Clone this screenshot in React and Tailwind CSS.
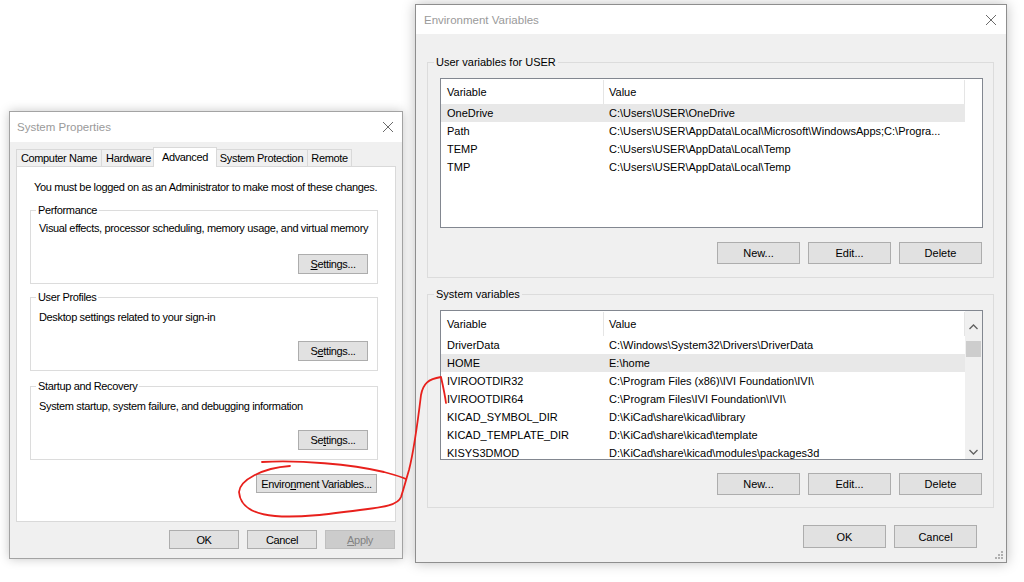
import { useState } from "react";

// small helpers for the win10 look
function Btn({ children, className = "", disabled = false }) {
  return (
    <button
      className={
        "flex items-center justify-center border whitespace-nowrap leading-[16px] " +
        (disabled ? "bg-[#cccccc] border-[#bfbfbf] text-[#838383] " : "bg-[#e1e1e1] border-[#adadad] text-black ") +
        className
      }
    >
      {children}
    </button>
  );
}

function CloseX() {
  return (
    <svg width="12" height="12" viewBox="0 0 12 12">
      <path d="M1 1L11 11M11 1L1 11" stroke="#6b6b6b" strokeWidth="1" fill="none" />
    </svg>
  );
}

function Group({ title, desc, mnemonic, className = "", pad = "pt-[2px]" }) {
  return (
    <fieldset className={"border border-[#dcdcdc] " + className}>
      <legend className="ml-[5px] px-[2px] leading-[16px] whitespace-nowrap">{title}</legend>
      <div className={"h-[65px] flex flex-col pl-[8px] pr-[9px] pb-[9px] " + pad}>
        <div className="leading-[16px] whitespace-nowrap">{desc}</div>
        <Btn className="mt-auto self-end w-[70px] h-[20px]">{mnemonic}</Btn>
      </div>
    </fieldset>
  );
}

function VarList({ rows, selected, scroll }) {
  return (
    <div className="h-[150px] border border-[#828790] bg-white flex overflow-hidden">
      <div className="w-[524px] flex flex-col">
        <div className="h-[24px] mt-[1px] flex shrink-0">
          <div className="w-[163px] border-r border-[#e5e5e5] pl-[6px] flex items-center">Variable</div>
          <div className="flex-1 border-r border-[#e5e5e5] pl-[5px] flex items-center">Value</div>
        </div>
        {rows.map(([k, v], i) => (
          <div key={k} className={"h-[18px] shrink-0 flex items-center " + (i === selected ? "bg-[#e8e8e8]" : "")}>
            <div className="w-[163px] pl-[6px] whitespace-nowrap">{k}</div>
            <div className="flex-1 pl-[5px] whitespace-nowrap overflow-hidden">{v}</div>
          </div>
        ))}
      </div>
      {scroll ? (
        <div className="w-[17px] bg-[#f0f0f0] flex flex-col items-center">
          <div className="h-[22px] flex items-end justify-center pb-[3px]">
            <svg width="9" height="6" viewBox="0 0 9 6">
              <path d="M0.5 5L4.5 1L8.5 5" stroke="#606060" strokeWidth="1.3" fill="none" />
            </svg>
          </div>
          <div className="mt-[8px] w-[15px] h-[16px] bg-[#cdcdcd]" />
          <div className="mt-auto mb-[4px]">
            <svg width="9" height="6" viewBox="0 0 9 6">
              <path d="M0.5 1L4.5 5L8.5 1" stroke="#606060" strokeWidth="1.3" fill="none" />
            </svg>
          </div>
        </div>
      ) : (
        <div className="w-[17px] bg-white" />
      )}
    </div>
  );
}

export default function App() {
  const [tab] = useState("Advanced");
  const tabs = [
    ["Computer Name", "w-[86px]"],
    ["Hardware", "w-[55px]"],
    ["Advanced", "w-[64px]"],
    ["System Protection", "w-[93px]"],
    ["Remote", "w-[45px]"],
  ];

  const userVars = [
    ["OneDrive", "C:\\Users\\USER\\OneDrive"],
    ["Path", "C:\\Users\\USER\\AppData\\Local\\Microsoft\\WindowsApps;C:\\Progra..."],
    ["TEMP", "C:\\Users\\USER\\AppData\\Local\\Temp"],
    ["TMP", "C:\\Users\\USER\\AppData\\Local\\Temp"],
  ];
  const sysVars = [
    ["DriverData", "C:\\Windows\\System32\\Drivers\\DriverData"],
    ["HOME", "E:\\home"],
    ["IVIROOTDIR32", "C:\\Program Files (x86)\\IVI Foundation\\IVI\\"],
    ["IVIROOTDIR64", "C:\\Program Files\\IVI Foundation\\IVI\\"],
    ["KICAD_SYMBOL_DIR", "D:\\KiCad\\share\\kicad\\library"],
    ["KICAD_TEMPLATE_DIR", "D:\\KiCad\\share\\kicad\\template"],
    ["KISYS3DMOD", "D:\\KiCad\\share\\kicad\\modules\\packages3d"],
  ];

  return (
    <div className="relative w-[1024px] h-[582px] bg-white overflow-hidden font-['Liberation_Sans',Arial,sans-serif] text-[11px] leading-[16px] text-black">
      {/* System Properties */}
      <div className="absolute left-[9px] top-[111px] w-[394px] h-[448px] border border-[#a3a3a3] bg-[#f0f0f0] flex flex-col shadow-[0_0_10px_rgba(0,0,0,0.22)] tracking-[-0.35px]">
        <div className="h-[30px] bg-white flex items-center justify-between pl-[7px] pr-[8px] shrink-0">
          <span className="text-[#9a9a9a] text-[11.5px] tracking-normal">System Properties</span>
          <CloseX />
        </div>
        <div className="flex flex-col px-[6px]">
          <div className="mt-[5px] h-[19px] flex items-end relative z-10">
            {tabs.map(([t, w]) =>
              t === tab ? (
                <div key={t} className={w + " -mx-[2px] h-[20px] mb-[-1px] bg-white border border-b-0 border-[#d9d9d9] flex items-start justify-center pt-[1px] relative z-10 whitespace-nowrap"}>
                  {t}
                </div>
              ) : (
                <div key={t} className={w + " h-[17px] -mr-px border border-b-0 border-[#d9d9d9] flex items-center justify-center whitespace-nowrap"}>
                  {t}
                </div>
              )
            )}
          </div>
          <div className="h-[356px] border border-[#d9d9d9] bg-white flex flex-col pl-[13px] pr-[17px] pt-[12px]">
            <div className="ml-[4px] whitespace-nowrap">You must be logged on as an Administrator to make most of these changes.</div>
            <Group className="mt-[7px]" title="Performance" desc="Visual effects, processor scheduling, memory usage, and virtual memory" mnemonic={<span><u>S</u>ettings...</span>} />
            <Group className="mt-[5px]" pad="pt-[4px]" title="User Profiles" desc="Desktop settings related to your sign-in" mnemonic={<span>S<u>e</u>ttings...</span>} />
            <Group className="mt-[7px]" pad="pt-[4px]" title="Startup and Recovery" desc="System startup, system failure, and debugging information" mnemonic={<span>Se<u>t</u>tings...</span>} />
            <Btn className="mt-[14px] self-end mr-[1px] w-[121px] h-[19px]">
              <span>Enviro<u>n</u>ment Variables...</span>
            </Btn>
          </div>
          <div className="mt-[8px] flex justify-end gap-[8px] pr-[1px]">
            <Btn className="w-[70px] h-[19px]">OK</Btn>
            <Btn className="w-[70px] h-[19px]">Cancel</Btn>
            <Btn disabled className="w-[70px] h-[19px]"><span><u>A</u>pply</span></Btn>
          </div>
        </div>
      </div>

      {/* Environment Variables */}
      <div className="absolute left-[415px] top-[4px] w-[592px] h-[559px] border border-[#8e8e8e] bg-[#f0f0f0] flex flex-col shadow-[0_0_12px_rgba(0,0,0,0.25)]">
        <div className="h-[29px] bg-white flex items-center justify-between pl-[8px] pr-[9px] shrink-0">
          <span className="text-[#9a9a9a] text-[11.5px]">Environment Variables</span>
          <CloseX />
        </div>
        <div className="flex flex-col pl-[11px] pr-[12px] pt-[20px]">
          <fieldset className="border border-[#dcdcdc]">
            <legend className="ml-[6px] px-[2px] leading-[16px]">User variables for USER</legend>
            <div className="flex flex-col pl-[12px] pr-[10px] pt-[8px] pb-[13px]">
              <VarList rows={userVars} selected={0} />
              <div className="mt-[14px] flex justify-end gap-[8px] pr-[1px]">
                <Btn className="w-[83px] h-[22px]">New...</Btn>
                <Btn className="w-[83px] h-[22px]">Edit...</Btn>
                <Btn className="w-[83px] h-[22px]">Delete</Btn>
              </div>
            </div>
          </fieldset>
          <fieldset className="mt-[8px] border border-[#dcdcdc]">
            <legend className="ml-[6px] px-[2px] leading-[16px]">System variables</legend>
            <div className="flex flex-col pl-[12px] pr-[10px] pt-[8px] pb-[12px]">
              <VarList rows={sysVars} selected={1} scroll />
              <div className="mt-[13px] flex justify-end gap-[8px] pr-[1px]">
                <Btn className="w-[83px] h-[22px]">New...</Btn>
                <Btn className="w-[83px] h-[22px]">Edit...</Btn>
                <Btn className="w-[83px] h-[22px]">Delete</Btn>
              </div>
            </div>
          </fieldset>
          <div className="mt-[17px] flex justify-end gap-[8px] pr-[17px]">
            <Btn className="w-[83px] h-[23px]">OK</Btn>
            <Btn className="w-[83px] h-[23px]">Cancel</Btn>
          </div>
        </div>
        <svg className="absolute right-[2px] bottom-[2px]" width="10" height="10" viewBox="0 0 10 10">
          <g fill="#b0b0b0">
            <rect x="7" y="1" width="2" height="2" />
            <rect x="4" y="4" width="2" height="2" />
            <rect x="7" y="4" width="2" height="2" />
            <rect x="1" y="7" width="2" height="2" />
            <rect x="4" y="7" width="2" height="2" />
            <rect x="7" y="7" width="2" height="2" />
          </g>
        </svg>
      </div>

      {/* red hand-drawn annotation */}
      <svg className="absolute left-0 top-0 pointer-events-none z-20" width="1024" height="582" viewBox="0 0 1024 582">
        <g stroke="#e8201c" strokeWidth="1.8" fill="none" strokeLinecap="round" strokeLinejoin="round">
          <path d="M262 462 C300 460 350 464 384 472 C395 475 402 477 406 479" />
          <path d="M290 466 C262 468 240 480 239 492 C240 506 252 514 275 516 C300 518 330 514 360 510 C385 507 398 505 401 497 C404 488 406 480 409 470 C414 450 418 420 421 395 C423 384 428 379 441 377 C443 386 445 395 446 403" />
        </g>
      </svg>
    </div>
  );
}
